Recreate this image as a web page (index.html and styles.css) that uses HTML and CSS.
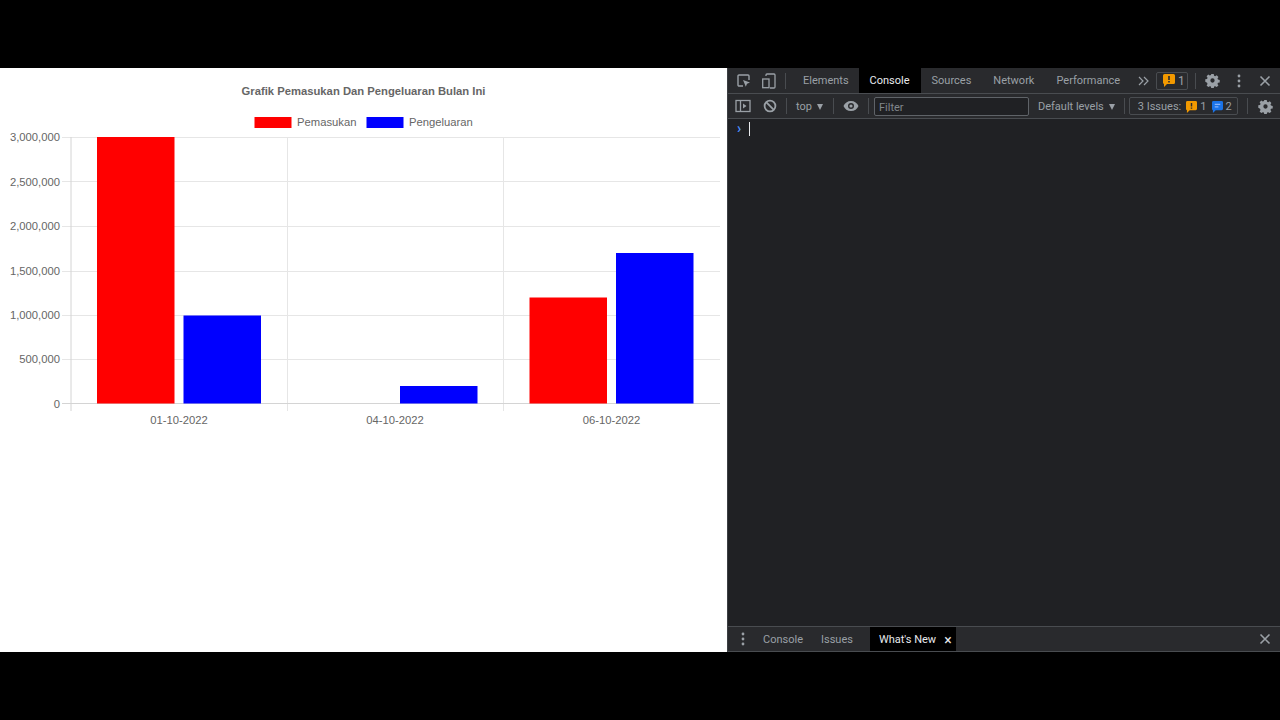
FILE: index.html
```html
<!DOCTYPE html>
<html>
	<head>
		<meta charset="UTF-8">
		<title>Grafik</title>
		<link rel="stylesheet" href="styles.css">
	</head>
	<body>
		<div class="screen">
			<div class="page">
				<svg class="chart" width="727" height="584" viewBox="0 68 727 584">
					<text class="title" x="363.5" y="95">Grafik Pemasukan Dan Pengeluaran Bulan Ini</text>
					<!-- legend -->
					<rect class="red" x="254.5" y="117" width="37" height="11"/>
					<text class="label" x="297" y="126">Pemasukan</text>
					<rect class="blue" x="366.5" y="117" width="37" height="11"/>
					<text class="label" x="409" y="126">Pengeluaran</text>
					<!-- grid -->
					<path class="grid" d="M62 137.5H720M62 181.5H720M62 226.5H720M62 271.5H720M62 315.5H720M62 359.5H720"/>
					<path class="grid" d="M287.5 137V411M503.5 137V411"/>
					<path class="axis" d="M62 403.5H720M71 137V411"/>
					<!-- y axis -->
					<text class="tick" x="60" y="141">3,000,000</text>
					<text class="tick" x="60" y="185.500">2,500,000</text>
					<text class="tick" x="60" y="230">2,000,000</text>
					<text class="tick" x="60" y="274.500">1,500,000</text>
					<text class="tick" x="60" y="319">1,000,000</text>
					<text class="tick" x="60" y="363">500,000</text>
					<text class="tick" x="60" y="407.500">0</text>
					<!-- bars -->
					<rect class="red" x="97" y="137" width="77.500" height="266.500"/>
					<rect class="blue" x="183.500" y="315.500" width="77.500" height="88"/>
					<rect class="blue" x="400" y="386" width="77.500" height="17.500"/>
					<rect class="red" x="529.500" y="297.500" width="77.500" height="106"/>
					<rect class="blue" x="616" y="253" width="77.500" height="150.500"/>
					<!-- x axis -->
					<text class="date" x="179" y="424">01-10-2022</text>
					<text class="date" x="395" y="424">04-10-2022</text>
					<text class="date" x="611.500" y="424">06-10-2022</text>
				</svg>
			</div>
			<div class="devtools">
				<div class="toolbar tabs">
					<div class="icons">
						<svg width="16" height="16" viewBox="0 0 16 16"><path d="M7 13H3a1 1 0 0 1-1-1V3a1 1 0 0 1 1-1h9a1 1 0 0 1 1 1v4" fill="none" stroke="#9aa0a6" stroke-width="1.400"/><path d="M7 7l7 2.500-3 1.200-1.200 3z" fill="#9aa0a6"/></svg>
						<svg width="16" height="16" viewBox="0 0 16 16"><path d="M5 3V2a1 1 0 0 1 1-1h7a1 1 0 0 1 1 1v12a1 1 0 0 1-1 1H9" fill="none" stroke="#9aa0a6" stroke-width="1.300"/><rect x="1.700" y="6" width="6.300" height="8.700" fill="none" stroke="#9aa0a6" stroke-width="1.300"/></svg>
					</div>
					<span class="sep sep-top"></span>
					<div class="tab tab-first">Elements</div>
					<div class="tab on">Console</div>
					<div class="tab">Sources</div>
					<div class="tab">Network</div>
					<div class="tab">Performance</div>
					<svg class="more" width="24" height="12" viewBox="0 0 24 12"><path d="M8 2l4 4-4 4M13 2l4 4-4 4"/></svg>
					<div class="badge">
						<svg class="flag" width="12" height="13" viewBox="0 0 12 13"><path class="warn" d="M1.500 0h9A1.500 1.500 0 0 1 12 1.500v7A1.500 1.500 0 0 1 10.500 10H4l-3 3v-3A1.500 1.500 0 0 1 0 8.500v-7A1.500 1.500 0 0 1 1.500 0z"/><path class="mark" d="M5.200 2h1.600v4H5.200zM5.200 7h1.600v1.500H5.200z"/></svg>
						<span>1</span>
					</div>
					<span class="sep sep-badge"></span>
					<svg class="gear gear-top" width="15" height="15" viewBox="0 0 16 16"><use href="#gear"/></svg>
					<svg class="dots" width="4" height="14" viewBox="0 0 4 14"><circle cx="2" cy="2" r="1.400"/><circle cx="2" cy="7" r="1.400"/><circle cx="2" cy="12" r="1.400"/></svg>
					<svg class="close" width="12" height="12" viewBox="0 0 12 12"><path d="M1.500 1.500l9 9M10.500 1.500l-9 9"/></svg>
				</div>
				<div class="toolbar filters">
					<svg width="16" height="14" viewBox="0 0 16 14"><rect x="1" y="1.500" width="14" height="11" fill="none" stroke="#9aa0a6" stroke-width="1.300"/><path d="M5.500 2V12" stroke="#9aa0a6" stroke-width="1.300"/><path d="M8 4.500l3.500 2.500L8 9.500z" fill="#9aa0a6"/></svg>
					<svg class="block" width="14" height="14" viewBox="0 0 14 14"><circle cx="7" cy="7" r="5.400" fill="none" stroke="#9aa0a6" stroke-width="1.800"/><path d="M3.200 3.200l7.600 7.600" stroke="#9aa0a6" stroke-width="1.800"/></svg>
					<span class="sep sep-block"></span>
					<div class="select top">top <i class="arrow"></i></div>
					<span class="sep sep-context"></span>
					<svg class="eye" width="16" height="12" viewBox="0 0 16 12"><path d="M8 1C4.500 1 1.700 3 .5 6c1.200 3 4 5 7.500 5s6.300-2 7.500-5C14.300 3 11.500 1 8 1zm0 8a3 3 0 1 1 0-6 3 3 0 0 1 0 6z" fill="#9aa0a6"/><circle cx="8" cy="6" r="1.600" fill="#9aa0a6"/></svg>
					<span class="sep sep-eye"></span>
					<div class="filter">Filter</div>
					<div class="select levels">Default levels <i class="arrow"></i></div>
					<span class="sep sep-levels"></span>
					<div class="issues">
						<span>3 Issues:</span>
						<svg class="flag flag-one" width="11" height="12" viewBox="0 0 12 13"><path class="warn" d="M1.500 0h9A1.500 1.500 0 0 1 12 1.500v7A1.500 1.500 0 0 1 10.500 10H4l-3 3v-3A1.500 1.500 0 0 1 0 8.500v-7A1.500 1.500 0 0 1 1.500 0z"/><path class="mark" d="M5.200 2h1.600v4H5.200zM5.200 7h1.600v1.500H5.200z"/></svg>
						<span>1</span>
						<svg class="flag flag-two" width="11" height="12" viewBox="0 0 12 13"><path class="info" d="M1.500 0h9A1.500 1.500 0 0 1 12 1.500v7A1.500 1.500 0 0 1 10.500 10H4l-3 3v-3A1.500 1.500 0 0 1 0 8.500v-7A1.500 1.500 0 0 1 1.500 0z"/><path class="lines" d="M3 3h6v1.200H3zM3 5.800h4V7H3z"/></svg>
						<span>2</span>
					</div>
					<span class="sep sep-issues"></span>
					<svg class="gear gear-low" width="15" height="15" viewBox="0 0 16 16">
						<defs>
							<path id="gear" fill-rule="evenodd" d="M6.700 1h2.600l.4 1.900 1.200.5 1.600-1 1.800 1.800-1 1.600.5 1.200 1.900.4v2.600l-1.900.4-.5 1.200 1 1.600-1.800 1.800-1.600-1-1.200.5-.4 1.900H6.700l-.4-1.900-1.200-.5-1.600 1-1.800-1.800 1-1.600-.5-1.200L.3 9.300V6.700l1.900-.4.500-1.200-1-1.600 1.800-1.800 1.600 1 1.200-.5zM8 5.700a2.300 2.300 0 1 0 0 4.600 2.300 2.300 0 0 0 0-4.600z"/>
						</defs>
						<use href="#gear"/>
					</svg>
				</div>
				<div class="console">
					<span class="prompt">›</span><span class="caret"></span>
				</div>
				<div class="toolbar drawer">
					<svg class="dots" width="4" height="14" viewBox="0 0 4 14"><circle cx="2" cy="2" r="1.400"/><circle cx="2" cy="7" r="1.400"/><circle cx="2" cy="12" r="1.400"/></svg>
					<div class="tab">Console</div>
					<div class="tab">Issues</div>
					<div class="tab on new">What's New <span class="x">×</span></div>
					<svg class="close" width="12" height="12" viewBox="0 0 12 12"><path d="M1.500 1.500l9 9M10.500 1.500l-9 9"/></svg>
				</div>
			</div>
		</div>
	</body>
</html>
```

FILE: styles.css
```css
html, body{
	margin: 0;
	padding: 0;
	height: 100%;
	background: #000;
}
.screen{
	display: flex;
	height: 584px;
	padding-top: 68px;
	font-family: "Liberation Sans", Arial, sans-serif;
}
.page{
	width: 727px;
	background: #fff;
	flex-shrink: 0;
}
.chart{
	display: block;
}
.chart text{
	font-family: "Liberation Sans", Arial, sans-serif;
	font-size: 11.25px;
	fill: #666;
}
.chart .title{
	font-weight: bold;
	text-anchor: middle;
}
.chart .tick{
	text-anchor: end;
}
.chart .date{
	text-anchor: middle;
}
.red{
	fill: #f00;
}
.blue{
	fill: #00f;
}
.grid{
	fill: none;
	stroke: #e6e6e6;
	stroke-width: 1;
}
.axis{
	fill: none;
	stroke: #d4d4d4;
	stroke-width: 1;
}
.devtools{
	width: 552px;
	min-width: 0;
	display: flex;
	flex-direction: column;
	background: #202124;
	color: #9aa0a6;
	font-family: Roboto, "Liberation Sans", sans-serif;
	font-size: 11px;
	border-left: 1px solid #3c3f43;
}
.toolbar{
	display: flex;
	align-items: center;
	background: #292a2d;
	flex-shrink: 0;
}
.toolbar svg{
	flex-shrink: 0;
}
.tabs{
	height: 25px;
	border-bottom: 1px solid #494c50;
}
.filters{
	height: 24px;
	border-bottom: 1px solid #494c50;
	padding-left: 7px;
}
.icons{
	display: flex;
	gap: 9px;
	padding-left: 8px;
}
.sep{
	width: 1px;
	height: 16px;
	background: #494c50;
	flex-shrink: 0;
}
.sep-top{
	margin: 0 6px 0 8px;
}
.sep-badge{
	margin: 0 9px 0 7px;
}
.sep-block{
	margin-left: 9px;
}
.sep-context{
	margin-left: 10px;
}
.sep-eye{
	margin-left: 9px;
}
.sep-levels{
	margin-left: 9px;
}
.sep-issues{
	margin-left: 9px;
}
.tab{
	height: 100%;
	padding: 0 11px;
	display: flex;
	align-items: center;
	color: #9aa0a6;
}
.tab-first{
	padding-right: 10px;
}
.tab.on{
	background: #000;
	color: #e8eaed;
}
.more{
	fill: none;
	stroke: #9aa0a6;
	stroke-width: 1.200;
}
.badge{
	display: flex;
	align-items: center;
	gap: 3px;
	box-sizing: border-box;
	width: 32px;
	height: 18px;
	margin-left: 1px;
	padding-left: 6px;
	border: 1px solid #494c50;
	border-radius: 2px;
	font-size: 12px;
}
.flag{
	display: block;
}
.warn{
	fill: #f29900;
}
.info{
	fill: #1a73e8;
}
.mark{
	fill: #292a2d;
}
.lines{
	fill: #8ab4f8;
}
.gear{
	fill: #9aa0a6;
}
.dots{
	fill: #9aa0a6;
	margin-left: 17px;
}
.close{
	stroke: #9aa0a6;
	stroke-width: 1.600;
	fill: none;
	margin-left: 18px;
}
.block{
	margin-left: 12px;
}
.select{
	display: flex;
	align-items: center;
	padding-top: 1px;
	white-space: nowrap;
}
.top{
	margin-left: 9px;
}
.arrow{
	display: block;
	border: 3.500px solid transparent;
	border-top: 6px solid #9aa0a6;
	border-bottom: 0;
	margin-left: 5px;
}
.eye{
	margin-left: 9px;
}
.filter{
	box-sizing: border-box;
	width: 155px;
	height: 19px;
	line-height: 19px;
	margin-left: 5px;
	padding-left: 4px;
	border: 1px solid #5f6368;
	border-radius: 2px;
	background: #202124;
	color: #80868b;
}
.levels{
	margin-left: 9px;
}
.issues{
	display: flex;
	align-items: center;
	box-sizing: border-box;
	width: 109px;
	height: 18px;
	margin-left: 4px;
	padding: 1px 0 0 8px;
	border: 1px solid #494c50;
	border-radius: 2px;
	white-space: nowrap;
}
.flag-one{
	margin: 0 3px 0 5px;
}
.flag-two{
	margin: 0 2px 0 6px;
}
.gear-low{
	margin-left: 10px;
}
.console{
	flex: 1;
	padding: 2px 0 0 9px;
	display: flex;
	align-items: flex-start;
	gap: 8px;
}
.prompt{
	color: #4d90fe;
	font-size: 14px;
	line-height: 14px;
	font-weight: bold;
}
.caret{
	width: 1px;
	height: 14px;
	margin-top: 1px;
	background: #e8eaed;
}
.drawer{
	height: 24px;
	border-top: 1px solid #494c50;
	border-bottom: 1px solid #494c50;
	padding-left: 13px;
}
.drawer .tab{
	padding: 1px 9px 0;
	box-sizing: border-box;
}
.drawer .dots{
	margin-left: 0;
	margin-right: 9px;
}
.drawer .new{
	width: 86px;
	margin-left: 8px;
	white-space: nowrap;
}
.x{
	font-size: 14px;
	margin-left: 8px;
}
.drawer .close{
	margin-left: auto;
	margin-right: 9px;
}
```
